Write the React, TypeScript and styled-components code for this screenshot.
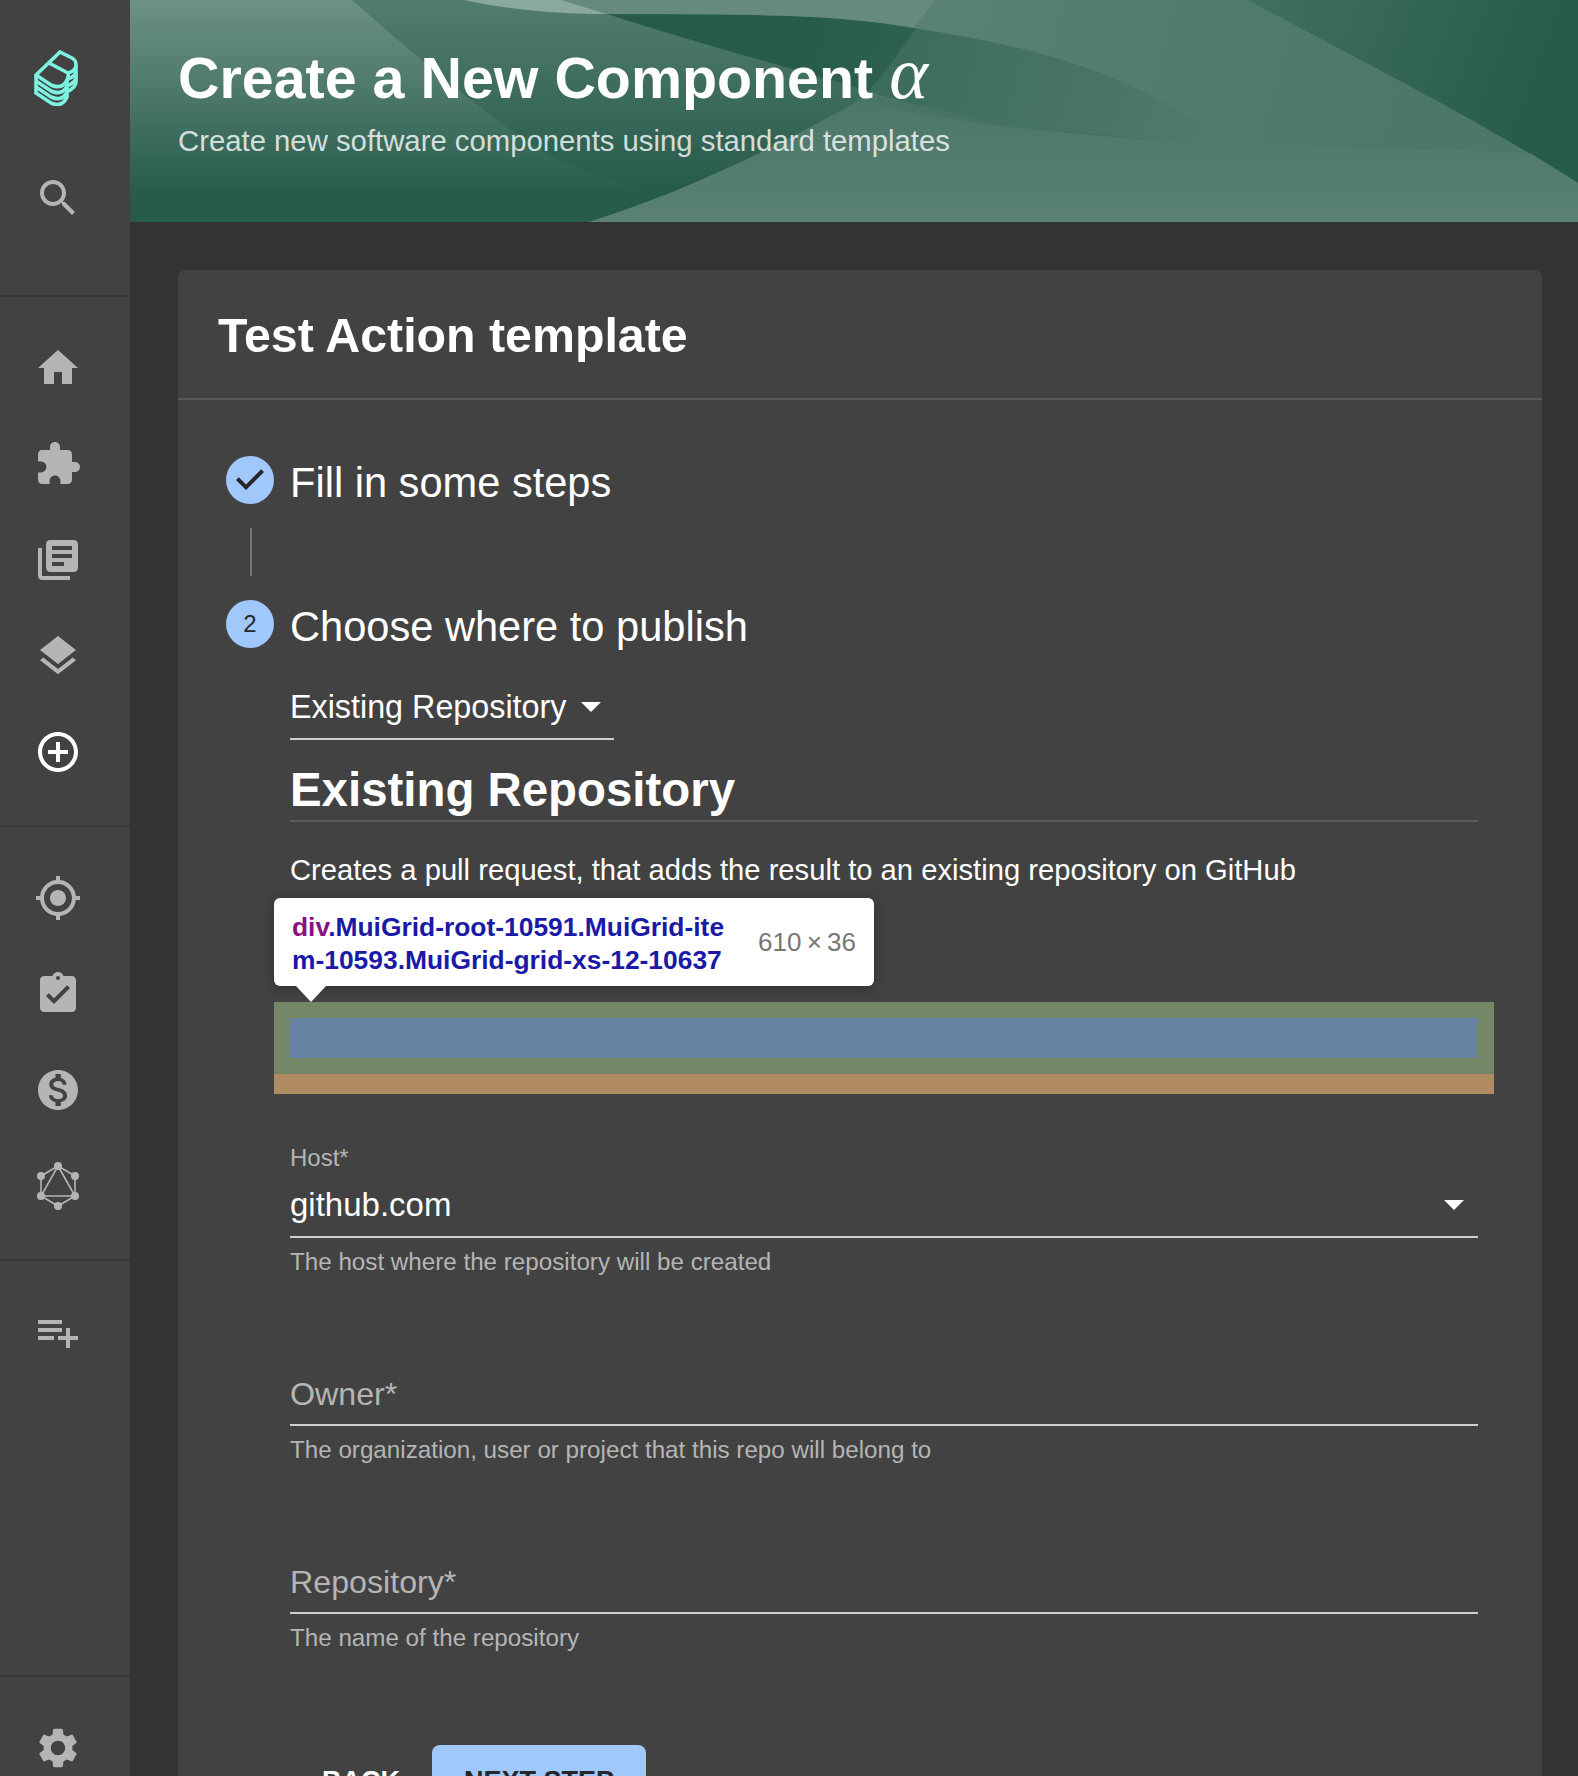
import styled, { createGlobalStyle } from 'styled-components'

const GlobalStyle = createGlobalStyle`
  html, body {
    margin: 0;
    padding: 0;
    background: #333333;
    font-family: "Liberation Sans", Arial, sans-serif;
    color: #ffffff;
  }
`

const Page = styled.div`
  display: flex;
  width: 1578px;
  height: 1776px;
  overflow: hidden;
  background: #333333;
`

const Sidebar = styled.nav`
  flex: 0 0 130px;
  display: flex;
  flex-direction: column;
  background: #424242;
`

const TopBlock = styled.div`
  height: 295px;
  flex: none;
  box-sizing: border-box;
  padding-top: 50px;
`

const LogoLink = styled.a`
  display: block;
  width: 44px;
  height: 56px;
  margin: 0 0 68px 34px;
`

const NavGroup = styled.div<{ $grow?: boolean }>`
  flex: ${({ $grow }) => ($grow ? '0 0 416px' : 'none')};
  box-sizing: border-box;
  padding: 23px 0 25px;
  border-top: 2px solid #383838;
`

const NavItem = styled.a<{ $active?: boolean }>`
  display: flex;
  align-items: center;
  height: 96px;
  padding-left: 34px;
  color: ${({ $active }) => ($active ? '#ffffff' : '#b5b5b5')};
`

const SearchItem = styled(NavItem)`
  height: 48px;
`

const Glyph = styled.svg`
  width: 48px;
  height: 48px;
  fill: currentColor;
  display: block;
`

const Main = styled.main`
  flex: 1;
  min-width: 0;
  display: flex;
  flex-direction: column;
`

const Header = styled.header`
  position: relative;
  height: 222px;
  flex: none;
  box-sizing: border-box;
  padding: 43px 0 0 48px;
  overflow: hidden;
`

const Waves = styled.svg`
  position: absolute;
  inset: 0;
  width: 100%;
  height: 100%;
`

const Title = styled.h1`
  position: relative;
  margin: 0;
  font-size: 57.4px;
  line-height: 70px;
  font-weight: 700;
`

const Alpha = styled.span`
  font-family: "Liberation Serif", "Times New Roman", serif;
  font-style: italic;
  font-weight: 400;
  font-size: 74px;
  line-height: 0;
`

const Subtitle = styled.p`
  position: relative;
  margin: 11px 0 0;
  font-size: 29.3px;
  line-height: 34px;
  color: rgba(255, 255, 255, 0.8);
`

const Content = styled.div`
  flex: 1;
  padding: 48px 36px 0 48px;
`

const Card = styled.section`
  background: #424242;
  border-radius: 8px 8px 0 0;
  height: 1600px;
`

const CardHeader = styled.div`
  height: 130px;
  box-sizing: border-box;
  padding: 36px 40px 0;
  border-bottom: 2px solid #5a5a5a;
`

const CardTitle = styled.h2`
  margin: 0;
  font-size: 48.3px;
  line-height: 58px;
  font-weight: 700;
`

const CardBody = styled.div`
  padding: 56px 64px 0 48px;
`

const StepHead = styled.div`
  display: flex;
  align-items: center;
  gap: 16px;
  height: 48px;
`

const StepDot = styled.div`
  width: 48px;
  height: 48px;
  flex: none;
  border-radius: 50%;
  background: #a1c8fb;
  color: #26262a;
  display: flex;
  align-items: center;
  justify-content: center;
  font-size: 24px;
`

const StepLabel = styled.div`
  font-size: 41.6px;
  line-height: 48px;
  padding-top: 6px;
`

const Connector = styled.div`
  width: 0;
  height: 48px;
  margin: 24px 0 24px 24px;
  border-left: 2px solid #777777;
`

const StepContent = styled.div`
  margin-left: 64px;
`

const SelectBox = styled.div`
  display: flex;
  align-items: center;
  width: 324px;
  box-sizing: content-box;
  margin-top: 24px;
  padding: 17px 0 13px;
  border-bottom: 2px solid #cfcfcf;
  font-size: 32.3px;
  line-height: 36px;
`

const Caret = styled.span<{ $push?: boolean }>`
  width: 0;
  height: 0;
  margin-left: ${({ $push }) => ($push ? 'auto' : '15px')};
  margin-right: ${({ $push }) => ($push ? '14px' : '0')};
  border-left: 10px solid transparent;
  border-right: 10px solid transparent;
  border-top: 10px solid #ffffff;
`

const SectionTitle = styled.h3`
  margin: 26px 0 0;
  padding-bottom: 6px;
  border-bottom: 2px solid #5c5c5c;
  font-size: 47.4px;
  line-height: 48px;
  font-weight: 700;
`

const Description = styled.p`
  margin: 30px 0 0;
  font-size: 29.2px;
  line-height: 36px;
`

const Highlight = styled.div`
  position: relative;
  margin: 114px -16px 0;
  padding-bottom: 20px;
  background: #b08b62;
`

const HighlightPadding = styled.div`
  padding: 16px;
  background: #738665;
`

const HighlightBox = styled.div`
  height: 40px;
  background: #6582a3;
`

const Inspector = styled.div`
  position: absolute;
  left: 0;
  top: -104px;
  width: 600px;
  height: 88px;
  box-sizing: border-box;
  padding: 13px 18px 0;
  display: flex;
  justify-content: space-between;
  background: #ffffff;
  border-radius: 6px;
  box-shadow: 0 2px 12px rgba(0, 0, 0, 0.3);
  &::after {
    content: '';
    position: absolute;
    left: 22px;
    top: 88px;
    border-left: 15px solid transparent;
    border-right: 15px solid transparent;
    border-top: 16px solid #ffffff;
  }
`

const InspectorName = styled.div`
  width: 440px;
  font-size: 26.4px;
  line-height: 32.5px;
  font-weight: 700;
  color: #1a1aa6;
  word-break: break-all;
`

const InspectorTag = styled.span`
  color: #881280;
`

const InspectorSize = styled.div`
  font-size: 26px;
  line-height: 62px;
  color: #777777;
`

const Field = styled.div<{ $gap: number }>`
  margin-top: ${({ $gap }) => $gap}px;
`

const FieldLabel = styled.div`
  font-size: 24px;
  line-height: 28px;
  color: #b5b5b5;
`

const FieldRow = styled.div<{ $labelled?: boolean; $empty?: boolean }>`
  display: flex;
  align-items: center;
  padding: ${({ $labelled }) => ($labelled ? '15px 0 13px' : '0 0 12px')};
  border-bottom: 2px solid #cfcfcf;
  font-size: ${({ $empty }) => ($empty ? '32.2px' : '33px')};
  line-height: 36px;
  color: ${({ $empty }) => ($empty ? '#b5b5b5' : '#ffffff')};
`

const Helper = styled.div`
  margin-top: 10px;
  font-size: 24.2px;
  line-height: 28px;
  color: #b5b5b5;
`

const Actions = styled.div`
  display: flex;
  margin-top: 93px;
`

const Button = styled.button<{ $primary?: boolean }>`
  height: 72px;
  padding: 0 32px;
  border: 0;
  border-radius: 8px;
  background: ${({ $primary }) => ($primary ? '#a1c8fb' : 'transparent')};
  color: ${({ $primary }) => ($primary ? '#26262a' : '#ffffff')};
  font-family: inherit;
  font-size: 27px;
  font-weight: 700;
`

const icons = {
  search:
    'M15.5 14h-.79l-.28-.27C15.41 12.59 16 11.11 16 9.5 16 5.91 13.09 3 9.5 3S3 5.91 3 9.5 5.91 16 9.5 16c1.61 0 3.09-.59 4.23-1.57l.27.28v.79l5 4.99L20.49 19l-4.99-5zm-6 0C7.01 14 5 11.99 5 9.5S7.01 5 9.5 5 14 7.01 14 9.5 11.99 14 9.5 14z',
  home: 'M10 20v-6h4v6h5v-8h3L12 3 2 12h3v8z',
  extension:
    'M20.5 11H19V7c0-1.1-.9-2-2-2h-4V3.5C13 2.12 11.88 1 10.5 1S8 2.12 8 3.5V5H4c-1.1 0-1.99.9-1.99 2v3.8H3.5c1.49 0 2.7 1.21 2.7 2.7s-1.21 2.7-2.7 2.7H2V20c0 1.1.9 2 2 2h3.8v-1.5c0-1.49 1.21-2.7 2.7-2.7 1.49 0 2.7 1.21 2.7 2.7V22H17c1.1 0 2-.9 2-2v-4h1.5c1.38 0 2.5-1.12 2.5-2.5S21.88 11 20.5 11z',
  library:
    'M4 6H2v14c0 1.1.9 2 2 2h14v-2H4V6zm16-4H8c-1.1 0-2 .9-2 2v12c0 1.1.9 2 2 2h12c1.1 0 2-.9 2-2V4c0-1.1-.9-2-2-2zm-1 9H9V9h10v2zm-4 4H9v-2h6v2zm4-8H9V5h10v2z',
  layers:
    'M11.99 18.54l-7.37-5.73L3 14.07l9 7 9-7-1.63-1.27-7.38 5.74zM12 16l7.36-5.73L21 9l-9-7-9 7 1.63 1.27L12 16z',
  add: 'M13 7h-2v4H7v2h4v4h2v-4h4v-2h-4V7zm-1-5C6.48 2 2 6.48 2 12s4.48 10 10 10 10-4.48 10-10S17.52 2 12 2zm0 18c-4.41 0-8-3.59-8-8s3.59-8 8-8 8 3.59 8 8-3.59 8-8 8z',
  location:
    'M12 8c-2.21 0-4 1.79-4 4s1.79 4 4 4 4-1.79 4-4-1.79-4-4-4zm8.94 3c-.46-4.17-3.77-7.48-7.94-7.94V1h-2v2.06C6.83 3.52 3.52 6.83 3.06 11H1v2h2.06c.46 4.17 3.77 7.48 7.94 7.94V23h2v-2.06c4.17-.46 7.48-3.77 7.94-7.94H23v-2h-2.06zM12 19c-3.87 0-7-3.13-7-7s3.13-7 7-7 7 3.13 7 7-3.13 7-7 7z',
  assignment:
    'M19 3h-4.18C14.4 1.84 13.3 1 12 1c-1.3 0-2.4.84-2.82 2H5c-1.1 0-2 .9-2 2v14c0 1.1.9 2 2 2h14c1.1 0 2-.9 2-2V5c0-1.1-.9-2-2-2zm-7 0c.55 0 1 .45 1 1s-.45 1-1 1-1-.45-1-1 .45-1 1-1zm-2 14l-4-4 1.41-1.41L10 14.17l6.59-6.59L18 9l-8 8z',
  money:
    'M12 2C6.48 2 2 6.48 2 12s4.48 10 10 10 10-4.48 10-10S17.52 2 12 2zm1.41 16.09V20h-2.67v-1.93c-1.71-.36-3.16-1.46-3.27-3.4h1.96c.1 1.05.82 1.87 2.65 1.87 1.96 0 2.4-.98 2.4-1.59 0-.83-.44-1.61-2.67-2.14-2.48-.6-4.18-1.62-4.18-3.67 0-1.72 1.39-2.84 3.11-3.21V4h2.67v1.95c1.86.45 2.79 1.86 2.87 3.39H14.3c-.05-1.11-.64-1.87-2.22-1.87-1.5 0-2.4.68-2.4 1.64 0 .84.65 1.39 2.67 1.91s4.18 1.39 4.18 3.91c-.01 1.83-1.38 2.83-3.12 3.16z',
  playlist: 'M14 10H2v2h12v-2zm0-4H2v2h12V6zm4 8v-4h-2v4h-4v2h4v4h2v-4h4v-2h-4zM2 16h8v-2H2v2z',
  settings:
    'M19.14 12.94c.04-.3.06-.61.06-.94 0-.32-.02-.64-.07-.94l2.03-1.58c.18-.14.23-.41.12-.61l-1.92-3.32c-.12-.22-.37-.29-.59-.22l-2.39.96c-.5-.38-1.03-.7-1.62-.94l-.36-2.54c-.04-.24-.24-.41-.48-.41h-3.84c-.24 0-.43.17-.47.41l-.36 2.54c-.59.24-1.13.57-1.62.94l-2.39-.96c-.22-.08-.47 0-.59.22L2.74 8.87c-.12.21-.08.47.12.61l2.03 1.58c-.05.3-.09.63-.09.94s.02.64.07.94l-2.03 1.58c-.18.14-.23.41-.12.61l1.92 3.32c.12.22.37.29.59.22l2.39-.96c.5.38 1.03.7 1.62.94l.36 2.54c.05.24.24.41.48.41h3.84c.24 0 .44-.17.47-.41l.36-2.54c.59-.24 1.13-.56 1.62-.94l2.39.96c.22.08.47 0 .59-.22l1.92-3.32c.12-.22.07-.47-.12-.61l-2.01-1.58zM12 15.6c-1.98 0-3.6-1.62-3.6-3.6s1.62-3.6 3.6-3.6 3.6 1.62 3.6 3.6-1.62 3.6-3.6 3.6z',
  check: 'M10 17l-5-5 1.4-1.4 3.6 3.6 7.6-7.6L19 8l-9 9z'
}

const Icon = ({ name }: { name: keyof typeof icons }) => (
  <Glyph viewBox="0 0 24 24">
    <path d={icons[name]} />
  </Glyph>
)

const GraphqlIcon = () => (
  <Glyph viewBox="0 0 48 48">
    <path d="M24 4 41 14V34L24 44 7 34V14Z M24 4 41 34H7Z" fill="none" stroke="currentColor" strokeWidth="1.6" />
    <circle cx="24" cy="4" r="4" />
    <circle cx="41" cy="14" r="4" />
    <circle cx="41" cy="34" r="4" />
    <circle cx="24" cy="44" r="4" />
    <circle cx="7" cy="34" r="4" />
    <circle cx="7" cy="14" r="4" />
  </Glyph>
)

const Logo = () => (
  <svg viewBox="0 0 44 56" width="44" height="56" fill="none" stroke="#7df3e1" strokeWidth="3.6">
    <path d="M26 2 2 25 17 35Q28 40 33 30 35 26 34 23 42 21 42 15 42 10 38 8Z" />
    <path d="M15 13 34 23" />
    <path d="M2 25V43L17 53Q28 58 33 47V30" />
    <path d="M2 31 17 41Q28 46 33 36" />
    <path d="M2 37 17 47Q28 52 33 42" />
    <path d="M42 15V32Q42 37 33 42" />
    <path d="M42 21Q42 26 34 29" />
    <path d="M42 27Q42 32 34 35.5" />
  </svg>
)

const HeaderWaves = () => (
  <Waves viewBox="130 0 1448 222" preserveAspectRatio="none">
    <defs>
      <linearGradient id="base" gradientUnits="userSpaceOnUse" x1="0" y1="0" x2="0" y2="195">
        <stop offset="0" stopColor="#6d9185" />
        <stop offset="1" stopColor="#275c4d" />
      </linearGradient>
      <linearGradient id="band" gradientUnits="userSpaceOnUse" x1="0" y1="0" x2="0" y2="190">
        <stop offset="0" stopColor="#527c6e" />
        <stop offset="1" stopColor="#265b4c" />
      </linearGradient>
      <linearGradient id="corner" gradientUnits="userSpaceOnUse" x1="1250" y1="0" x2="1540" y2="110">
        <stop offset="0" stopColor="#416f61" />
        <stop offset="1" stopColor="#265b4c" />
      </linearGradient>
      <linearGradient id="lens" gradientUnits="userSpaceOnUse" x1="800" y1="30" x2="1200" y2="150">
        <stop offset="0" stopColor="#265b4c" />
        <stop offset="1" stopColor="#416f61" />
      </linearGradient>
      <linearGradient id="rim" gradientUnits="userSpaceOnUse" x1="940" y1="0" x2="1400" y2="120">
        <stop offset="0" stopColor="#598174" />
        <stop offset="1" stopColor="#4c7769" />
      </linearGradient>
      <linearGradient id="below" gradientUnits="userSpaceOnUse" x1="0" y1="100" x2="0" y2="222">
        <stop offset="0" stopColor="#4b776a" />
        <stop offset="1" stopColor="#5a8173" />
      </linearGradient>
    </defs>
    <rect x="130" y="0" width="1448" height="222" fill="url(#base)" />
    <path d="M352 0C420 60 480 110 540 150 600 185 710 205 770 222H1578V0Z" fill="url(#band)" />
    <path d="M1247 0C1340 50 1470 115 1578 183V0Z" fill="url(#corner)" />
    <path
      d="M607 14C720 15 830 12 914 28 1010 42 1100 65 1170 105 1220 135 1250 155 1266 175L1222 143C1100 138 950 120 865 90 780 65 680 38 607 14Z"
      fill="url(#lens)"
    />
    <path d="M561 0 607 14C720 15 830 12 914 28L936 0Z" fill="#668a7d" />
    <path d="M464 0C510 10 560 14 607 14L561 0Z" fill="#8ba89e" />
    <path
      d="M589 222C690 190 800 140 860 100 885 75 900 50 936 0H1247C1340 50 1470 115 1578 183V222Z"
      fill="#ffffff"
      fillOpacity="0.08"
    />
    <path
      d="M936 0 914 28C1010 42 1100 65 1170 105 1220 135 1250 155 1266 175L1578 183C1470 115 1340 50 1247 0Z"
      fill="url(#rim)"
    />
    <path
      d="M589 222C690 190 780 145 860 100 950 125 1100 138 1222 143L1530 153 1578 183V222Z"
      fill="url(#below)"
    />
  </Waves>
)

export default function App() {
  return (
    <Page>
      <GlobalStyle />
      <Sidebar>
        <TopBlock>
          <LogoLink>
            <Logo />
          </LogoLink>
          <SearchItem>
            <Icon name="search" />
          </SearchItem>
        </TopBlock>
        <NavGroup>
          <NavItem><Icon name="home" /></NavItem>
          <NavItem><Icon name="extension" /></NavItem>
          <NavItem><Icon name="library" /></NavItem>
          <NavItem><Icon name="layers" /></NavItem>
          <NavItem $active><Icon name="add" /></NavItem>
        </NavGroup>
        <NavGroup>
          <NavItem><Icon name="location" /></NavItem>
          <NavItem><Icon name="assignment" /></NavItem>
          <NavItem><Icon name="money" /></NavItem>
          <NavItem><GraphqlIcon /></NavItem>
        </NavGroup>
        <NavGroup $grow>
          <NavItem><Icon name="playlist" /></NavItem>
        </NavGroup>
        <NavGroup>
          <NavItem><Icon name="settings" /></NavItem>
        </NavGroup>
      </Sidebar>
      <Main>
        <Header>
          <HeaderWaves />
          <Title>
            Create a New Component <Alpha>α</Alpha>
          </Title>
          <Subtitle>Create new software components using standard templates</Subtitle>
        </Header>
        <Content>
          <Card>
            <CardHeader>
              <CardTitle>Test Action template</CardTitle>
            </CardHeader>
            <CardBody>
              <StepHead>
                <StepDot>
                  <Icon name="check" />
                </StepDot>
                <StepLabel>Fill in some steps</StepLabel>
              </StepHead>
              <Connector />
              <StepHead>
                <StepDot>2</StepDot>
                <StepLabel>Choose where to publish</StepLabel>
              </StepHead>
              <StepContent>
                <SelectBox>
                  Existing Repository
                  <Caret />
                </SelectBox>
                <SectionTitle>Existing Repository</SectionTitle>
                <Description>
                  Creates a pull request, that adds the result to an existing repository on GitHub
                </Description>
                <Highlight>
                  <Inspector>
                    <InspectorName>
                      <InspectorTag>div</InspectorTag>.MuiGrid-root-10591.MuiGrid-item-10593.MuiGrid-grid-xs-12-10637
                    </InspectorName>
                    <InspectorSize>610{'\u2009'}×{'\u2009'}36</InspectorSize>
                  </Inspector>
                  <HighlightPadding>
                    <HighlightBox />
                  </HighlightPadding>
                </Highlight>
                <Field $gap={50}>
                  <FieldLabel>Host*</FieldLabel>
                  <FieldRow $labelled>
                    github.com
                    <Caret $push />
                  </FieldRow>
                  <Helper>The host where the repository will be created</Helper>
                </Field>
                <Field $gap={100}>
                  <FieldRow $empty>Owner*</FieldRow>
                  <Helper>The organization, user or project that this repo will belong to</Helper>
                </Field>
                <Field $gap={100}>
                  <FieldRow $empty>Repository*</FieldRow>
                  <Helper>The name of the repository</Helper>
                </Field>
                <Actions>
                  <Button>BACK</Button>
                  <Button $primary>NEXT STEP</Button>
                </Actions>
              </StepContent>
            </CardBody>
          </Card>
        </Content>
      </Main>
    </Page>
  )
}
